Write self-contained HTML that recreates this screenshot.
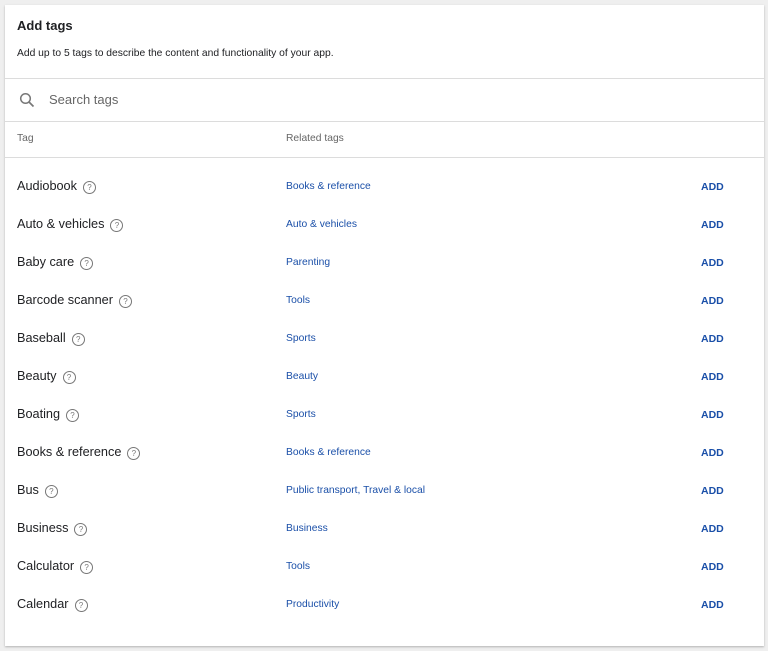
<!DOCTYPE html>
<html><head><style>
body{margin:0;background:#efefef;font-family:"Liberation Sans",Arial,sans-serif;width:768px;height:651px;overflow:hidden;position:relative}
.card{position:absolute;left:5px;top:5px;width:759px;height:641px;background:#fff;box-shadow:0 1px 2px rgba(0,0,0,.25)}
.t{position:absolute;white-space:nowrap}
.line{position:absolute;left:0;right:0;height:1px;background:#dcdcdc}
.tag{font-size:12.7px;color:#202124}
.rel{font-size:10.3px;color:#1a4fa8}
.add{font-size:10.5px;font-weight:bold;color:#1a4fa8}
.q{display:inline-block;width:11px;height:11px;border:1px solid #777;border-radius:50%;font-size:8px;line-height:11px;text-align:center;color:#777;margin-left:6px;vertical-align:0px}
</style></head><body>
<div class="card">
<div class="t" style="left:12px;top:13px;font-size:13px;font-weight:bold;color:#202124">Add tags</div>
<div class="t" style="left:12px;top:43px;font-size:10.3px;color:#202124">Add up to 5 tags to describe the content and functionality of your app.</div>
<div class="line" style="top:73px"></div>
<svg style="position:absolute;left:14px;top:87px" width="16" height="16" viewBox="0 0 16 16"><circle cx="6.5" cy="6.5" r="4.8" fill="none" stroke="#777" stroke-width="1.5"/><path d="M10 10L14.5 14.5" stroke="#777" stroke-width="1.7"/></svg>
<div class="t" style="left:44px;top:87px;font-size:13px;color:#666">Search tags</div>
<div class="line" style="top:116px"></div>
<div class="t" style="left:12px;top:128px;font-size:10.3px;color:#666">Tag</div>
<div class="t" style="left:281px;top:128px;font-size:10.3px;color:#666">Related tags</div>
<div class="line" style="top:152px"></div>
<div id="rows"></div>
</div>
<script>
var d=[["Audiobook","Books &amp; reference"],["Auto &amp; vehicles","Auto &amp; vehicles"],["Baby care","Parenting"],["Barcode scanner","Tools"],["Baseball","Sports"],["Beauty","Beauty"],["Boating","Sports"],["Books &amp; reference","Books &amp; reference"],["Bus","Public transport, Travel &amp; local"],["Business","Business"],["Calculator","Tools"],["Calendar","Productivity"]];
var h="";d.forEach(function(r,i){var y=182+38*i;
h+='<div class="t tag" style="left:12px;top:'+(y-8)+'px">'+r[0]+'<span class="q">?</span></div>';
h+='<div class="t rel" style="left:281px;top:'+(y-6)+'px">'+r[1]+'</div>';
h+='<div class="t add" style="left:696px;top:'+(y-6)+'px">ADD</div>';});
document.getElementById("rows").innerHTML=h;
</script>
</body></html>
